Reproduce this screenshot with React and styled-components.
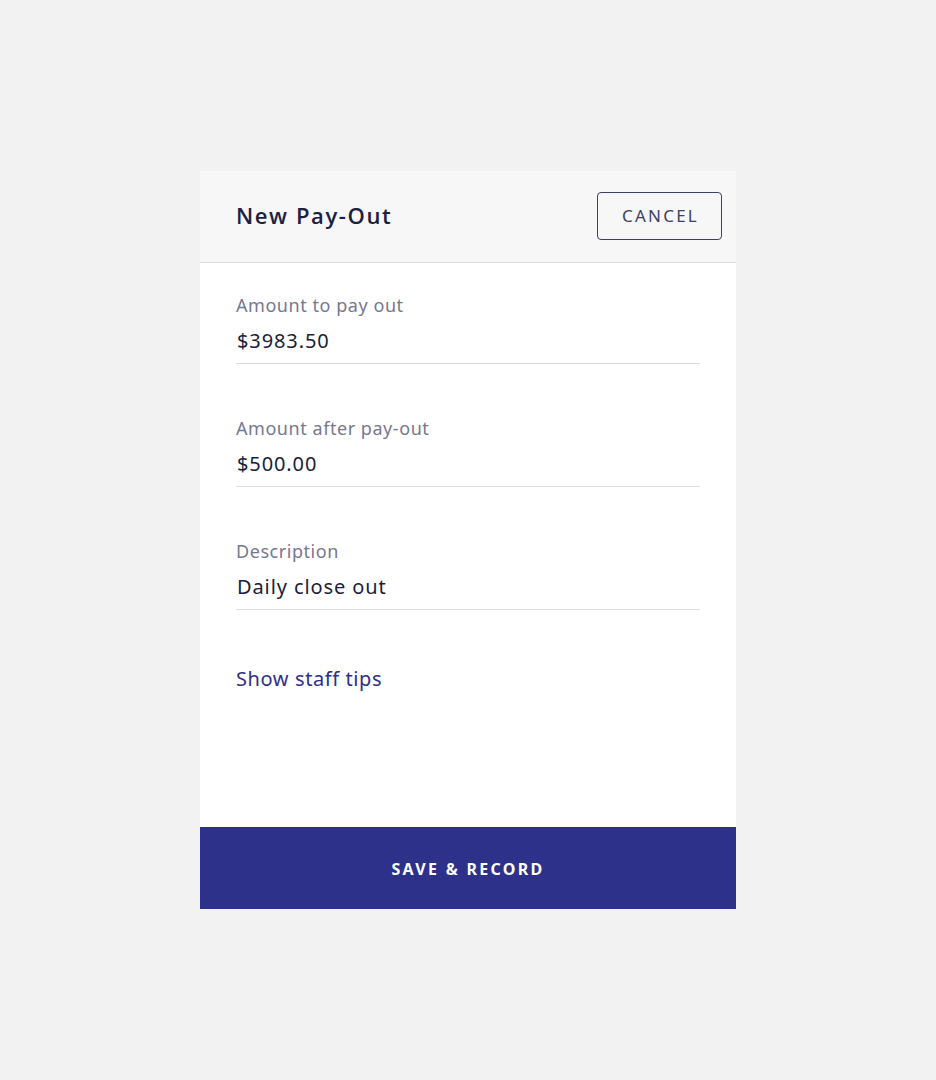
import styled, { createGlobalStyle } from 'styled-components';

const GlobalStyle = createGlobalStyle`
  html, body {
    margin: 0;
    padding: 0;
    background: #f2f2f2;
    font-family: "Noto Sans", "Liberation Sans", sans-serif;
  }
`;

const Page = styled.div`
  min-height: 1080px;
  display: flex;
  justify-content: center;
  padding-top: 171px;
  box-sizing: border-box;
`;

const Card = styled.section`
  width: 536px;
  height: 738px;
  background: #ffffff;
  display: flex;
  flex-direction: column;
`;

const Header = styled.header`
  height: 88px;
  background: #f7f7f7;
  border-bottom: 1px solid #dcdcdc;
  display: flex;
  align-items: center;
  justify-content: space-between;
  padding: 0 14px 3px 36px;
`;

const Title = styled.h1`
  margin: 0;
  font-family: "Open Sans", "Noto Sans", sans-serif;
  font-size: 22px;
  font-weight: 600;
  letter-spacing: 1.6px;
  color: #1d2040;
`;

const CancelButton = styled.button`
  width: 125px;
  height: 48px;
  margin-top: 1px;
  border: 1px solid #3e4262;
  border-radius: 4px;
  background: transparent;
  color: #3e4262;
  font-family: inherit;
  font-size: 17px;
  letter-spacing: 2.2px;
  padding: 0 0 0 2px;
  cursor: pointer;
`;

const Body = styled.div`
  flex: 1;
  padding: 30px 36px 0;
  display: flex;
  flex-direction: column;
  gap: 52px;
`;

const Field = styled.div`
  display: flex;
  flex-direction: column;
  border-bottom: 1px solid #dcdcdc;
  padding-bottom: 8px;
`;

const Label = styled.label`
  font-size: 18px;
  line-height: 24px;
  letter-spacing: 0.55px;
  color: #777790;
  margin-bottom: 10px;
`;

const Value = styled.div`
  font-size: 20px;
  line-height: 28px;
  letter-spacing: 0.9px;
  color: #1b1d3a;
  padding-left: 1px;
`;

const Link = styled.a`
  margin-top: 3px;
  font-size: 20px;
  line-height: 28px;
  letter-spacing: 0.6px;
  color: #2f2f88;
  text-decoration: none;
  cursor: pointer;
`;

const SaveButton = styled.button`
  height: 82px;
  border: none;
  background: #2e3189;
  color: #ffffff;
  font-family: inherit;
  font-size: 16px;
  font-weight: 700;
  letter-spacing: 2.3px;
  padding-top: 2px;
  cursor: pointer;
`;

const fields = [
  { label: 'Amount to pay out', value: '$3983.50' },
  { label: 'Amount after pay-out', value: '$500.00' },
  { label: 'Description', value: 'Daily close out' },
];

export default function App() {
  return (
    <>
      <GlobalStyle />
      <Page>
        <Card>
          <Header>
            <Title>New Pay-Out</Title>
            <CancelButton>CANCEL</CancelButton>
          </Header>
          <Body>
            {fields.map((f) => (
              <Field key={f.label}>
                <Label>{f.label}</Label>
                <Value>{f.value}</Value>
              </Field>
            ))}
            <Link>Show staff tips</Link>
          </Body>
          <SaveButton>SAVE &amp; RECORD</SaveButton>
        </Card>
      </Page>
    </>
  );
}
